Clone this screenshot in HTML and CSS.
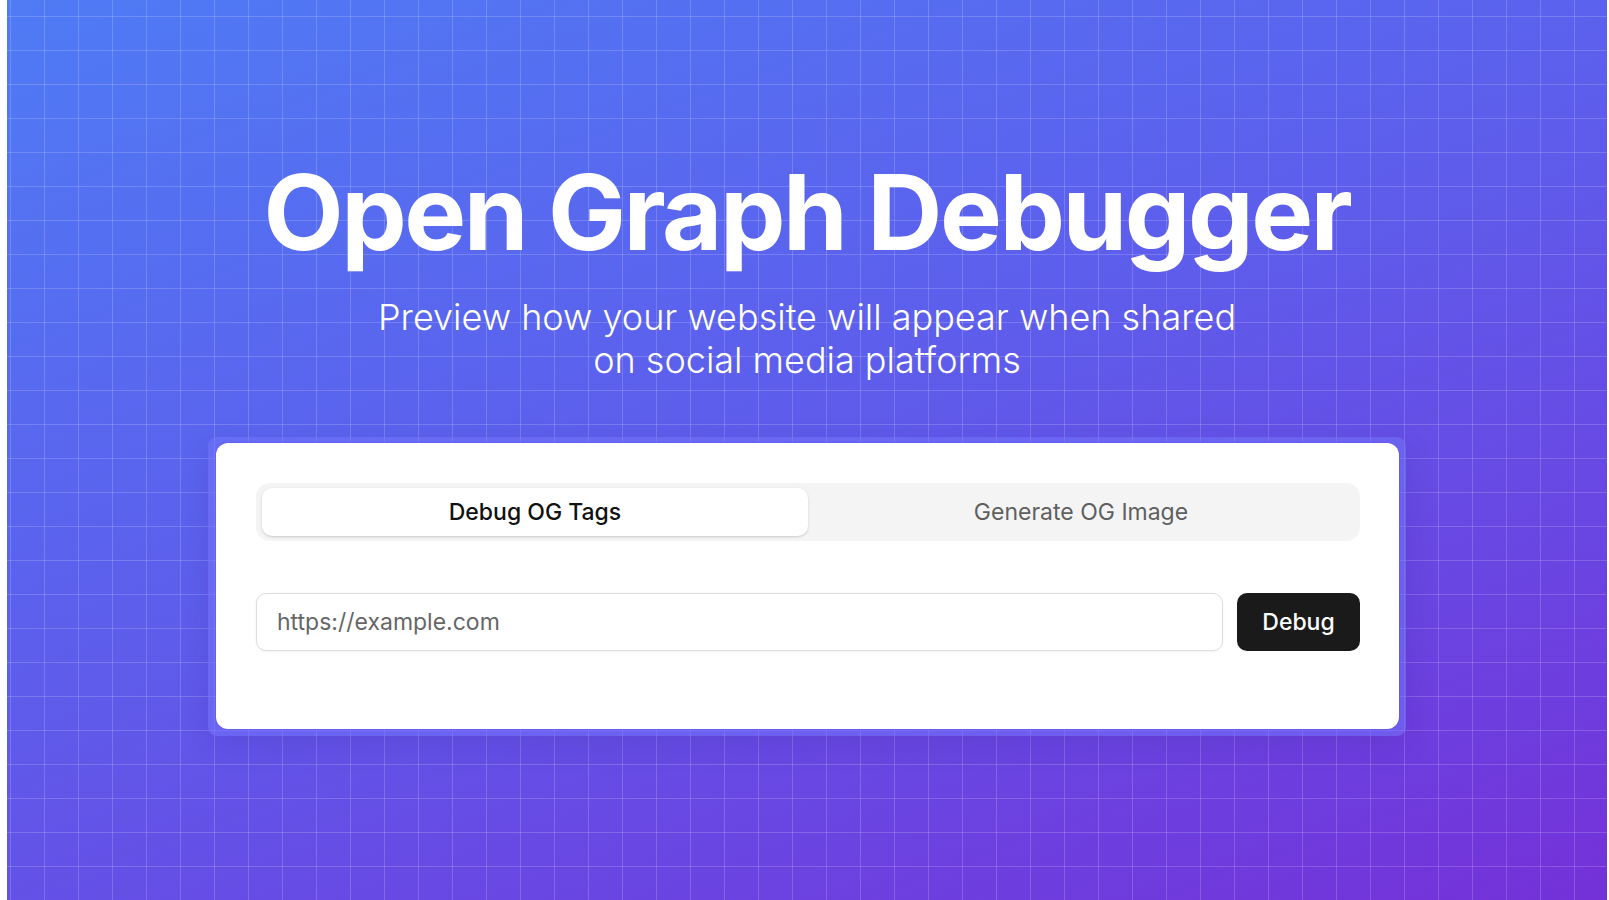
FILE: index.html
```html
<!DOCTYPE html>
<html lang="en">
<head>
<meta charset="utf-8">
<title>Open Graph Debugger</title>
<link rel="stylesheet" href="styles.css">
</head>
<body>
<main class="page">
  <header class="hero">
    <h1 class="title">Open Graph Debugger</h1>
    <p class="subtitle">Preview how your website will appear when shared on social media platforms</p>
  </header>
  <div class="card-frame">
    <section class="card">
      <div class="tabs">
        <button class="tab tab-active" type="button">Debug OG Tags</button>
        <button class="tab" type="button">Generate OG Image</button>
      </div>
      <form class="url-form">
        <input class="url-input" type="text" placeholder="https://example.com">
        <button class="debug-btn" type="button">Debug</button>
      </form>
    </section>
  </div>
</main>
</body>
</html>
```
FILE: styles.css
```css
* { box-sizing: border-box; }

html, body {
  margin: 0;
  padding: 0;
  background: #ffffff;
  font-family: "Inter", "Noto Sans", sans-serif;
}

.page {
  margin: 0 2px 0 7px;
  height: 900px;
  overflow: hidden;
  display: flex;
  flex-direction: column;
  align-items: center;
  background-color: #6156e7;
  background-image:
    linear-gradient(rgba(255, 255, 255, 0.17) 1px, transparent 1px),
    linear-gradient(90deg, rgba(255, 255, 255, 0.17) 1px, transparent 1px),
    linear-gradient(160deg, #4f7bf5 0%, #5d5eec 45%, #7431d8 100%);
  background-size: 34px 34px, 34px 34px, 100% 100%;
  background-position: 0 16px, 3px 0, 0 0;
}

.hero {
  padding-top: 155px;
  display: flex;
  flex-direction: column;
  align-items: center;
  text-align: center;
  color: #ffffff;
}

.title {
  margin: 0;
  font-size: 104px;
  line-height: 114px;
  font-weight: 700;
  letter-spacing: -2.5px;
}

.subtitle {
  margin: 27px 0 0;
  max-width: 880px;
  font-size: 36px;
  line-height: 43px;
  font-weight: 300;
}

.card-frame {
  margin-top: 55px;
  padding: 6px 7px 7px 8px;
  border-radius: 9px;
  background: rgba(115, 115, 250, 0.55);
  box-shadow: 0 10px 30px rgba(40, 20, 120, 0.12);
}

.card {
  width: 1183px;
  background: #ffffff;
  border-radius: 12px;
  padding: 40px 39px 78px 40px;
  box-shadow: 0 0 0 1px rgba(90, 80, 230, 0.4);
}

.tabs {
  display: grid;
  grid-template-columns: 1fr 1fr;
  padding: 5px 6px;
  height: 58px;
  background: #f4f4f4;
  border-radius: 14px;
}

.tab {
  border: 0;
  background: transparent;
  font-family: inherit;
  font-size: 23px;
  font-weight: 400;
  color: #5f5f5f;
  border-radius: 10px;
  cursor: pointer;
}

.tab-active {
  background: #ffffff;
  color: #111111;
  font-weight: 500;
  box-shadow: 0 1px 3px rgba(0, 0, 0, 0.12), 0 1px 2px rgba(0, 0, 0, 0.06);
}

.url-form {
  margin-top: 52px;
  display: flex;
  gap: 14px;
}

.url-input {
  flex: 1;
  height: 58px;
  padding: 0 20px;
  border: 1px solid #dddddd;
  border-radius: 10px;
  font-family: inherit;
  font-size: 23px;
  color: #222222;
  box-shadow: 0 1px 3px rgba(0, 0, 0, 0.06);
  outline: none;
}

.url-input::placeholder {
  color: #666666;
}

.debug-btn {
  width: 123px;
  height: 58px;
  border: 0;
  border-radius: 10px;
  background: #1a1a1a;
  color: #ffffff;
  font-family: inherit;
  font-size: 23px;
  font-weight: 500;
  cursor: pointer;
}
```
